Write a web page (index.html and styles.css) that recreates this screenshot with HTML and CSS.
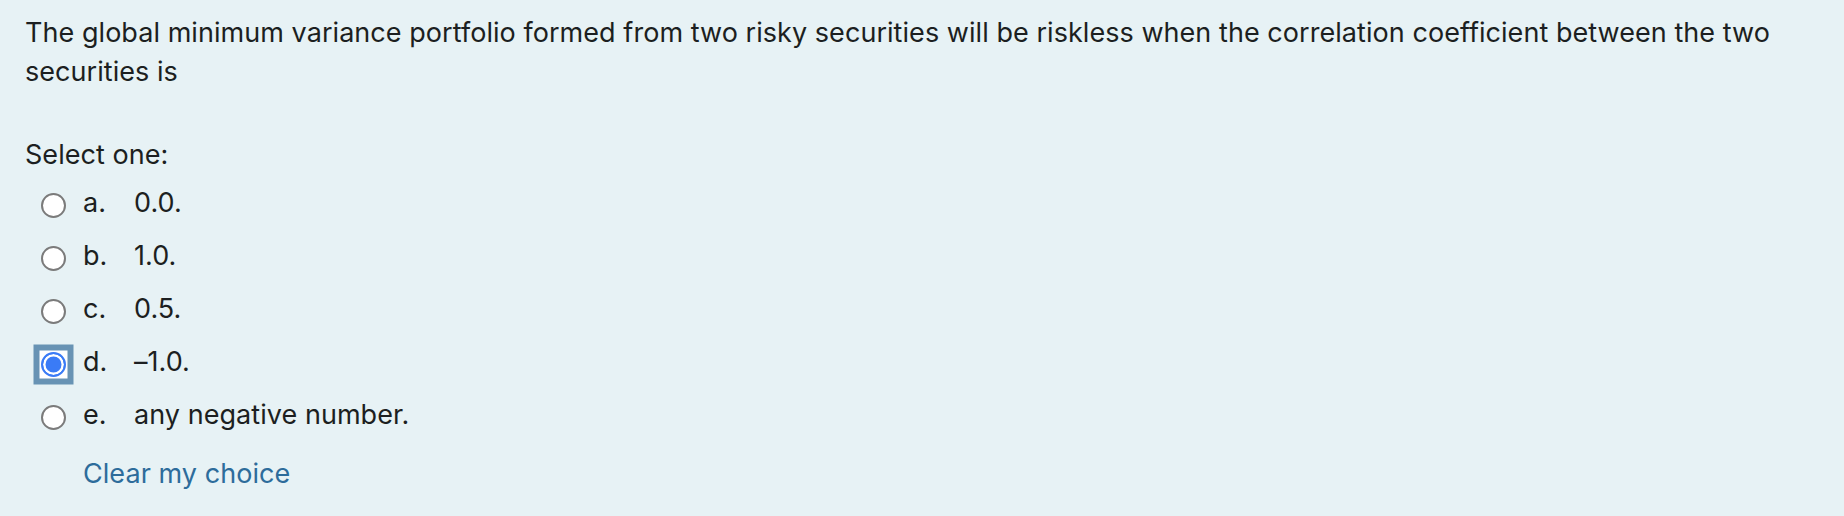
FILE: index.html
```html
<!DOCTYPE html>
<html lang="en">
<head>
<meta charset="utf-8">
<title>Question</title>
<link rel="stylesheet" href="styles.css">
</head>
<body>
<div class="formulation">
  <p class="qtext">The global minimum variance portfolio formed from two risky securities will be riskless when the correlation coefficient between the two securities is</p>
  <p class="prompt">Select one:</p>
  <div class="answers">
    <label class="opt">
      <span class="radio-wrap"><input type="radio" name="q" class="radio"></span>
      <span class="num">a.</span><span class="txt">0.0.</span>
    </label>
    <label class="opt">
      <span class="radio-wrap"><input type="radio" name="q" class="radio"></span>
      <span class="num">b.</span><span class="txt">1.0.</span>
    </label>
    <label class="opt">
      <span class="radio-wrap"><input type="radio" name="q" class="radio"></span>
      <span class="num">c.</span><span class="txt">0.5.</span>
    </label>
    <label class="opt">
      <span class="radio-wrap focused"><input type="radio" name="q" class="radio" checked></span>
      <span class="num">d.</span><span class="txt">&ndash;1.0.</span>
    </label>
    <label class="opt">
      <span class="radio-wrap"><input type="radio" name="q" class="radio"></span>
      <span class="num">e.</span><span class="txt">any negative number.</span>
    </label>
  </div>
  <a class="clear" href="#">Clear my choice</a>
</div>
</body>
</html>
```
FILE: styles.css
```css
html, body {
  margin: 0;
  padding: 0;
  background: #e7f2f5;
}
body {
  width: 1844px;
  height: 516px;
  overflow: hidden;
  font-family: Inter, "Liberation Sans", sans-serif;
  font-size: 27px;
  letter-spacing: 0.05px;
  line-height: 39px;
  color: #1c1f21;
}
.formulation {
  padding: 13px 20px 0 25px;
}
.qtext {
  margin: 0;
}
.prompt {
  margin: 44px 0 2px;
}
.answers {
  display: flex;
  flex-direction: column;
}
.opt {
  display: flex;
  align-items: flex-start;
  padding: 7px 0;
}
.radio-wrap {
  display: block;
  width: 25px;
  height: 25px;
  margin: 10px 17px 0 16px;
  border-radius: 50%;
  flex: none;
}
.radio-wrap.focused {
  border-radius: 0;
  background: #fff;
  box-shadow: 0 0 0 1.5px #fff, 0 0 0 7.5px #6893b4;
}
.radio {
  appearance: none;
  -webkit-appearance: none;
  display: block;
  box-sizing: border-box;
  width: 25px;
  height: 25px;
  margin: 0;
  border: 2px solid #7b7b7b;
  border-radius: 50%;
  background: #fff;
}
.radio:checked {
  border-color: #3a7bf6;
  background: #3a7bf6;
  box-shadow: inset 0 0 0 2.5px #fff;
}
.num {
  width: 51px;
  flex: none;
}
.clear {
  display: inline-block;
  margin: 13px 0 0 58px;
  color: #2d6c9b;
  text-decoration: none;
}
```
